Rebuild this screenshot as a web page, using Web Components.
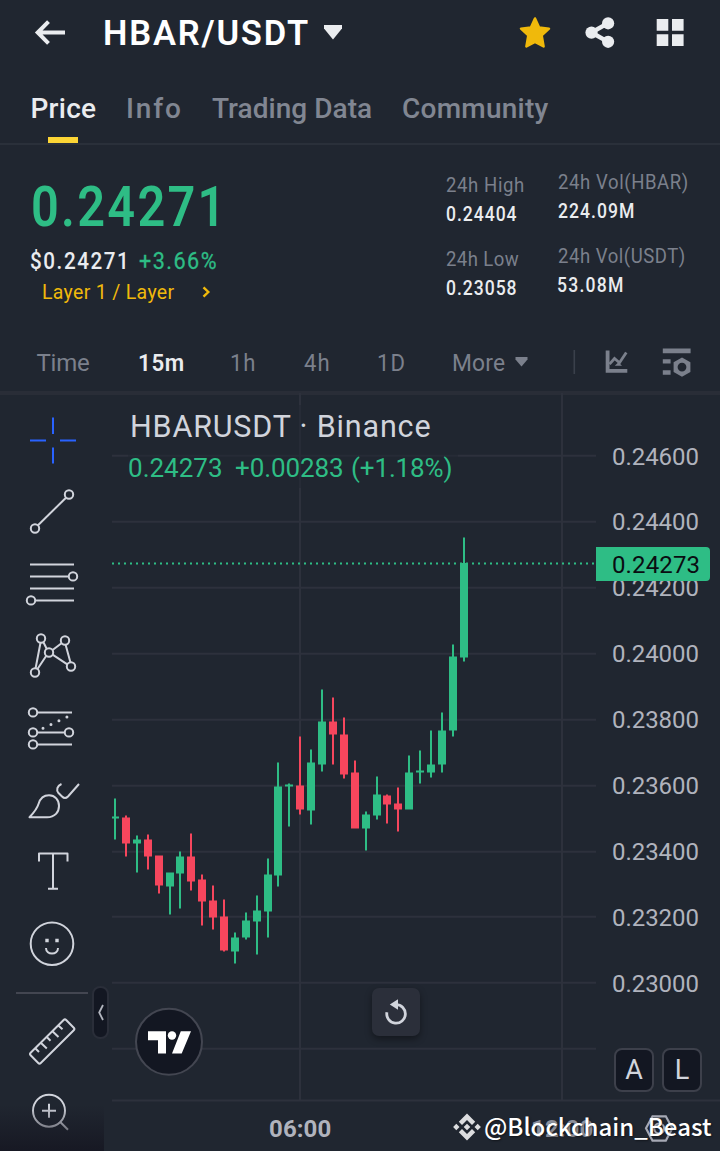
<!DOCTYPE html>
<html lang="en">
<head>
<meta charset="utf-8">
<title>HBAR/USDT</title>
<style>
  html, body {
    margin: 0;
    background: #202630;
  }
  body {
    font-family: Roboto, "Liberation Sans", sans-serif;
    color: #eaecef;
    --muted: #7b808c;
    --up: #2ebd85;
    --dark: #131722;
    --accent: #f0b90b;
  }
</style>
</head>
<body>
<trade-page></trade-page>

<script>
// one line of text, tracked so that its ink is exactly `w` pixels wide
class FitText extends HTMLElement {
  constructor() {
    super();
    this.attachShadow({ mode: 'open' }).innerHTML = `
      <style>
        :host { display: block; flex: none; }
        span { display: inline-block; white-space: pre; transform-origin: 0 50%; vertical-align: top; }
      </style>
      <span><slot></slot></span>
    `;
    this.$span = this.shadowRoot.querySelector('span');
    this.$slot = this.shadowRoot.querySelector('slot');
  }

  connectedCallback() {
    const text = this.$slot.assignedNodes({ flatten: true }).map(n => n.textContent).join('');
    const w = Number(this.getAttribute('w'));
    const squeeze = Number(this.getAttribute('squeeze') || 1);
    const style = getComputedStyle(this);
    const ctx = document.createElement('canvas').getContext('2d');
    ctx.font = `${style.fontWeight} ${style.fontSize} ${style.fontFamily}`;
    const m = ctx.measureText(text);
    const ink = m.actualBoundingBoxLeft + m.actualBoundingBoxRight;
    this.style.width = `${w}px`;
    this.$span.style.letterSpacing = `${(w / squeeze - ink) / Math.max(1, text.length - 1)}px`;
    this.$span.style.marginLeft = `${m.actualBoundingBoxLeft * squeeze}px`;
    if (squeeze !== 1) this.$span.style.transform = `scaleX(${squeeze})`;
  }
}

class PairHeader extends HTMLElement {
  constructor() {
    super();
    this.attachShadow({ mode: 'open' }).innerHTML = `
      <style>
        :host { display: flex; height: 66px; align-items: center; box-sizing: border-box; padding: 0 32px 0 34px; }
        svg { display: block; flex: none; margin-top: -1px; }
        fit-text { font-size: 34.5px; font-weight: 600; line-height: 68px; color: #fff; margin: 0 15px 0 39px; }
        .actions { display: flex; margin-left: auto; align-items: center; }
        .star { margin-right: 32.5px; }
        .share { margin-right: 36.5px; }
      </style>
      <svg width="32" height="64" viewBox="34 0 32 64" fill="none" stroke="#eaecef" stroke-width="4">
        <path d="M65 31.5H38M48.5 20.7L37.7 31.5l10.8 10.8"/>
      </svg>
      <fit-text w="203"><slot></slot></fit-text>
      <svg width="20" height="64" viewBox="323 0 20 64"><path d="M324 24h18v3.5l-9 11-9-11z" fill="#eaecef"/></svg>
      <div class="actions">
        <svg class="star" width="32" height="64" viewBox="519 0 32 64">
          <path d="M535 17.5l4.1 9 9.9 1.2-7.3 6.7 1.9 11.1-8.6-4.5-8.6 4.5 1.9-11.1-7.3-6.7 9.9-1.2z" fill="#f0b90b" stroke="#f0b90b" stroke-width="2.5" stroke-linejoin="round"/>
        </svg>
        <svg class="share" width="32" height="64" viewBox="583.5 0 32 64" fill="#eaecef">
          <path d="M607.5 22.2L591 31.5l16.5 9.3" fill="none" stroke="#eaecef" stroke-width="4.4"/>
          <circle cx="591" cy="31.6" r="6.1"/><circle cx="607.6" cy="22.3" r="6.1"/><circle cx="607.6" cy="40.8" r="6.1"/>
        </svg>
        <svg width="36" height="64" viewBox="652 0 36 64" fill="#eaecef">
          <path d="M656.7 18h11.6v11.8h-11.6zM672 18h11.6v11.8H672zM656.7 33.3h11.6v11.8h-11.6zM672 33.3h11.6v11.8H672z"/>
        </svg>
      </div>
    `;
  }
}

class TabBar extends HTMLElement {
  constructor() {
    super();
    this.attachShadow({ mode: 'open' }).innerHTML = `
      <style>
        :host { display: flex; height: 79px; box-sizing: border-box; border-bottom: 2px solid #2a303a; padding-left: 32.5px; gap: 32px; }
        fit-text { font-size: 28px; font-weight: 500; line-height: 86px; color: #818692; height: 77px; }
        .on { color: #eaecef; position: relative; }
        .on::after { content: ''; position: absolute; left: 15.5px; bottom: 0; width: 30px; height: 6px; background: #fcd535; }
      </style>
      <fit-text class="on" w="63.5">Price</fit-text>
      <fit-text w="52">Info</fit-text>
      <fit-text w="159">Trading Data</fit-text>
      <fit-text w="145.5">Community</fit-text>
    `;
  }
}

class MarketStat extends HTMLElement {
  constructor() {
    super();
    this.attachShadow({ mode: 'open' }).innerHTML = `
      <style>
        :host { display: block; height: 74px; font-size: 19.5px; line-height: 29px; }
        .label { color: var(--muted); }
        .value { color: #eaecef; font-weight: 500; }
      </style>
      <fit-text class="label" squeeze=".95" w="${this.getAttribute('lw')}">${this.getAttribute('label')}</fit-text>
      <fit-text class="value" squeeze=".9" w="${this.getAttribute('vw')}">${this.getAttribute('value')}</fit-text>
    `;
  }
}

class PriceSummary extends HTMLElement {
  constructor() {
    super();
    this.attachShadow({ mode: 'open' }).innerHTML = `
      <style>
        :host { display: flex; height: 185px; box-sizing: border-box; }
        .left { width: 446px; padding: 32px 0 0 33px; box-sizing: border-box; }
        .last { font-size: 56px; font-weight: 600; line-height: 60px; color: var(--up); }
        .row { display: flex; height: 48px; line-height: 48px; font-size: 24px; font-weight: 500; margin-left: -2px; gap: 13.5px; }
        .up { color: var(--up); font-weight: 400; -webkit-text-stroke: .3px var(--up); }
        .tag { display: flex; height: 32px; margin: -9px 0 0 10px; line-height: 33px; font-size: 19.5px; color: var(--accent); gap: 27px; }
        svg { display: block; }
        .a, .b { display: flex; flex-direction: column; }
        .a { padding-top: 25.5px; width: 111.5px; }
        .b { padding-top: 22.5px; }
      </style>
      <div class="left">
        <fit-text class="last" w="184" squeeze=".87">0.24271</fit-text>
        <div class="row">
          <fit-text w="94" squeeze=".86">$0.24271</fit-text>
          <fit-text class="up" w="77" squeeze=".9">+3.66%</fit-text>
        </div>
        <div class="tag">
          <fit-text w="131.5">Layer 1 / Layer</fit-text>
          <svg width="9" height="32" viewBox="0 -16 9 32" fill="none" stroke="#f0b90b" stroke-width="2.4"><path d="M1.5 -4.6L6.3 0 1.5 4.6"/></svg>
        </div>
      </div>
      <div class="a">
        <market-stat label="24h High" value="0.24404" lw="77.5" vw="70.5"></market-stat>
        <market-stat label="24h Low" value="0.23058" lw="73" vw="70.5"></market-stat>
      </div>
      <div class="b">
        <market-stat label="24h Vol(HBAR)" value="224.09M" lw="129.5" vw="75.5"></market-stat>
        <market-stat label="24h Vol(USDT)" value="53.08M" lw="126.5" vw="64.5"></market-stat>
      </div>
    `;
  }
}

class IntervalBar extends HTMLElement {
  constructor() {
    super();
    this.attachShadow({ mode: 'open' }).innerHTML = `
      <style>
        :host { display: flex; height: 65px; box-sizing: border-box; border-bottom: 4px solid #292d37; padding-left: 36.5px; font-size: 24px; line-height: 67px; color: var(--muted); }
        .on { color: #eaecef; font-weight: 600; }
        svg { display: block; }
      </style>
      <fit-text w="52.5">Time</fit-text>
      <fit-text class="on" w="44.5" squeeze=".93" style="margin-left: 49.5px">15m</fit-text>
      <fit-text w="22.5" squeeze=".92" style="margin-left: 48.5px">1h</fit-text>
      <fit-text w="24.5" squeeze=".92" style="margin-left: 49.5px">4h</fit-text>
      <fit-text w="25.5" squeeze=".92" style="margin-left: 51px">1D</fit-text>
      <fit-text w="51.5" squeeze=".95" style="margin-left: 48.5px">More</fit-text>
      <svg width="200" height="61" viewBox="504.5 330 200 61" fill="#7b808c">
        <path d="M515 357h12v2.5l-6 7-6-7z"/>
        <path d="M573 350h1.6v24H573z" fill="#3a404b"/>
        <path d="M605.2 350.5h3.8v18.4h17.8v3.8h-21.6z"/>
        <path d="M609 364.2l5-5.7 5 4.2 6.8-10.2" fill="none" stroke="#7b808c" stroke-width="2.8"/>
        <path d="M614.3 365.8l3.6-3.6 3.6 3.6z"/>
        <path d="M662.3 348.5h27.8v4.8h-27.8zM662.3 359.2h7.8v4.4h-7.8zM662.3 370.3h7.8v4.4h-7.8z"/>
        <path d="M681.5 357.5l8.4 4.8v9.6l-8.4 4.8-8.4-4.8v-9.6zm0 5.2a4.4 4.4 0 1 0 0 8.8 4.4 4.4 0 0 0 0-8.8z" fill-rule="evenodd"/>
      </svg>
    `;
  }
}

// every icon is drawn in a 104x72 cell, y = 0 is the middle of the cell
const TOOLS = {
  cross: '<path stroke="#2962ff" d="M30 .5h16M60 .5h16M53-22.5v16.5M53 7.500v16"/>',
  line: '<path d="M38 13.3L66-14.3"/><circle cx="35" cy="16.5" r="4.2"/><circle cx="69" cy="-17.5" r="4.2"/>',
  fib: '<path d="M30-19.6h44M30-7.6h39M30 4.4h44M35 16.4h39"/><circle cx="73" cy="-7.6" r="4.2"/><circle cx="31" cy="16.4" r="4.2"/>',
  pattern: `<path d="M40.5-13.3L35.6 12.3M43.3-14L46.8-7M46.3-.3L37.5 13M52.6-6L61.5-12.7M52.6-1.3L67.3 8.3M65.6-11.3L70.4 6.3"/>
    <circle cx="41" cy="-17.5" r="4.2"/><circle cx="65" cy="-15.5" r="4.2"/><circle cx="49" cy="-3.5" r="4.2"/><circle cx="35" cy="16.5" r="4.2"/><circle cx="71" cy="10.5" r="4.2"/>`,
  projection: `<path d="M37-15.6h35M37 4.4h28M37 16.4h35"/>
    <circle cx="33" cy="-15.6" r="4.2"/><circle cx="33" cy="4.4" r="4.2"/><circle cx="69" cy="4.4" r="4.2"/><circle cx="33" cy="16.4" r="4.2"/>
    <path stroke-width="3" stroke-linecap="round" stroke-dasharray="0 8.8" d="M43 .2L68-11.5"/>`,
  brush: '<path stroke-linejoin="round" d="M29.500 17.3H47C55 17.3 59 12 59 6S55-4.7 49-4.7C43-4.7 40-1 38.5 4S33.500 13 29.500 17.3z"/><path d="M61.5-16C57-14 56-10 58.5-7L62-3.5C64-1.5 66-1.5 68-3.5L79-16"/>',
  text: '<path d="M39-10.500v-8h28.5v8M53-18v34.5M48 16.7h10" stroke-linejoin="round"/>',
  smile: '<circle cx="52" cy="-.3" r="21.3"/><path d="M46 4c0 7.3 12 7.3 12 0"/><path fill="#d1d4dc" stroke="none" d="M45.3-5.2h3.4v3.4h-3.4zM55.3-5.2h3.4v3.4h-3.4z"/>',
  ruler: `<rect x="-25" y="-7.2" width="50" height="14.400" rx="1.8" transform="translate(52.2 .5) rotate(-44.7)"/>
    <path d="M35 7l4 4M40.5 1.5l6.3 6M46.5-4.3l4 4M52.2-10l6.3 6M58-15.7l4.5 4"/>`,
  zoom: '<circle cx="49" cy="-2.3" r="16"/><path d="M42-2.3h14M49-9.3v14M60.5 9.2L68 16.7"/>',
};

class ToolIcon extends HTMLElement {
  constructor() {
    super();
    this.attachShadow({ mode: 'open' }).innerHTML = `
      <style>
        :host { display: block; height: 72px; }
        svg { display: block; }
      </style>
      <svg width="104" height="72" viewBox="0 -36 104 72" fill="none" stroke="#d1d4dc" stroke-width="2">${TOOLS[this.getAttribute('name')]}</svg>
    `;
  }
}

class DrawingToolbar extends HTMLElement {
  constructor() {
    super();
    this.attachShadow({ mode: 'open' }).innerHTML = `
      <style>
        :host { display: block; position: relative; width: 112px; height: 756px; overflow: hidden; box-sizing: border-box; padding-top: 9px; }
        hr { width: 72px; height: 2px; margin: 11.5px 0 11.5px 16px; border: 0; background: #434651; }
        .fade { position: absolute; left: 0; bottom: 0; width: 104px; height: 46px; background: linear-gradient(rgba(22,23,34,0), rgba(22,23,34,.9)); }
        .handle { position: absolute; left: 92px; top: 591px; box-sizing: border-box; width: 17px; height: 53px; border: 2px solid #2a2e39; border-radius: 8px; background: var(--dark); }
        .handle svg { display: block; }
      </style>
      <tool-icon name="cross"></tool-icon>
      <tool-icon name="line"></tool-icon>
      <tool-icon name="fib"></tool-icon>
      <tool-icon name="pattern"></tool-icon>
      <tool-icon name="projection"></tool-icon>
      <tool-icon name="brush"></tool-icon>
      <tool-icon name="text"></tool-icon>
      <tool-icon name="smile"></tool-icon>
      <hr>
      <tool-icon name="ruler"></tool-icon>
      <tool-icon name="zoom"></tool-icon>
      <div class="fade"></div>
      <div class="handle"><svg width="13" height="49" viewBox="0 0 13 49" fill="none" stroke="#b2b5be" stroke-width="1.8"><path d="M9 17L5.2 24.5 9 32"/></svg></div>
    `;
  }
}

// x, body top, body bottom, wick top, wick bottom, direction
const CANDLES = [
  [115, 816.5, 818.5, 798.5, 839.5, 1], [126, 817.5, 843.5, 815.5, 856.5, 0], [137, 839.5, 843.5, 835.5, 872.5, 1],
  [148, 839.5, 856.5, 834.5, 869.5, 0], [159, 855.5, 885.5, 855.5, 893.5, 0], [170, 872.5, 886.5, 872.5, 914.5, 1],
  [180, 856.5, 873.5, 851.5, 908.5, 1], [191, 856.5, 881.5, 833.5, 890.5, 0], [202, 879.5, 901.5, 874.5, 925.5, 0],
  [213, 900.5, 917.5, 885.5, 929.5, 0], [224, 916.5, 950.5, 899.5, 951.5, 0], [235, 937.5, 951.5, 932.5, 963.5, 1],
  [246, 920.5, 937.5, 912.5, 939.5, 1], [257, 910.5, 921.5, 895.5, 954.5, 1], [268, 874.5, 911.5, 858.5, 937.5, 1],
  [278, 786.5, 875.5, 762.5, 886.5, 1], [289, 784.5, 786.5, 783.5, 826.5, 1], [300, 785.5, 809.5, 736.5, 814.5, 0],
  [311, 762.5, 810.5, 749.5, 824.5, 1], [322, 721.5, 764.5, 689.5, 771.5, 1], [333, 721.5, 734.5, 697.5, 764.5, 0],
  [344, 734.5, 774.5, 717.5, 778.5, 0], [355, 772.5, 828.5, 760.5, 828.5, 0], [366, 814.5, 828.5, 811.5, 850.5, 1],
  [377, 794.5, 815.5, 776.5, 819.5, 1], [387, 795.5, 804.5, 794.5, 823.5, 0], [398, 803.5, 809.5, 787.5, 831.5, 0],
  [409, 772.5, 809.5, 755.5, 809.5, 1], [420, 770.5, 772.5, 750.5, 783.5, 1], [431, 764.5, 772.5, 730.5, 777.5, 1],
  [442, 730.5, 764.5, 712.5, 772.5, 1], [453, 656.5, 730.5, 644.5, 736.5, 1], [464, 563, 657.5, 537.5, 661.5, 1],
];

class CandleChart extends HTMLElement {
  constructor() {
    super();
    const rows = [456, 522, 588, 654, 720, 786, 852, 917, 983, 1049];
    const grid = rows.map(y => `M112 ${y - .3}H596`).join('') + 'M300 393V1100M562 393V1100M112 1100.5H720';
    const candles = CANDLES.map(([x, top, bottom, high, low, up]) => `
      <path fill="${up ? '#2ebd85' : '#f6465d'}" d="M${x - 1} ${high}h2V${low}h-2zM${x - 4} ${top}h8V${bottom}h-8z"/>`).join('');
    this.attachShadow({ mode: 'open' }).innerHTML = `
      <style>
        :host { display: block; position: relative; width: 484px; height: 756px; }
        svg { display: block; overflow: visible; }
        .legend { position: absolute; left: 16px; top: 10px; background: rgba(32,38,48,.5); padding-right: 6px; }
        .name { font-size: 30.5px; line-height: 44px; color: #d1d4dc; margin-left: 4px; }
        .change { display: flex; font-size: 26px; line-height: 39px; color: var(--up); margin-left: 1px; }
        .reset { position: absolute; left: 260px; top: 593px; width: 48px; height: 48px; border-radius: 7px; background: #2b2f3a; box-shadow: 0 3px 7px rgba(0,0,0,.4); }
        .logo { position: absolute; left: 23px; top: 613px; }
      </style>
      <svg width="484" height="756" viewBox="112 395 484 756">
        <defs><clipPath id="pane"><path d="M112 395h484v756H112z"/></clipPath></defs>
        <path d="${grid}" fill="none" stroke="#2d313c" stroke-width="2"/>
        <g clip-path="url(#pane)">${candles}</g>
        <path d="M112 563.5H596" stroke="#2ebd85" stroke-width="2" stroke-dasharray="2 4"/>
      </svg>
      <div class="legend">
        <fit-text class="name" w="299">HBARUSDT · Binance</fit-text>
        <div class="change">
          <fit-text w="92">0.24273</fit-text>
          <fit-text w="107" style="margin-left: 14px">+0.00283</fit-text>
          <fit-text w="99.5" style="margin-left: 10px">(+1.18%)</fit-text>
        </div>
      </div>
      <svg class="logo" width="68" height="68" viewBox="135 1008 68 68">
        <circle cx="169" cy="1041.8" r="33" fill="#131722" stroke="#434651" stroke-width="2"/>
        <path fill="#fff" d="M148 1031.2h18v22.3h-8v-13.3h-10zM180.8 1031.2H191l-9.3 22.3H172z"/><circle cx="172" cy="1035.5" r="4.2" fill="#fff"/>
      </svg>
      <div class="reset">
        <svg width="48" height="48" viewBox="372 988 48 48"><path d="M386.9 1012.3A9.3 9.3 0 1 0 396 1004.6" fill="none" stroke="#d1d4dc" stroke-width="2.8"/><path d="M389.8 1004.5l8.2-5.3v10.5z" fill="#d1d4dc"/></svg>
      </div>
    `;
  }
}

class PriceAxis extends HTMLElement {
  constructor() {
    super();
    const labels = ['0.24600', '0.24400', '0.24200', '0.24000', '0.23800', '0.23600', '0.23400', '0.23200', '0.23000'];
    this.attachShadow({ mode: 'open' }).innerHTML = `
      <style>
        :host { display: block; position: relative; width: 124px; height: 756px; box-sizing: border-box; padding-top: 28.5px; font-size: 24px; color: #b0b3bd; }
        .label { height: 65.88px; line-height: 66px; margin-left: 17px; }
        .last { position: absolute; left: 0; top: 151.5px; width: 114px; height: 34px; box-sizing: border-box; padding-left: 17px; line-height: 36px; background: var(--up); color: #0a0d12; border-radius: 0 4px 4px 0; }
        .modes { display: flex; gap: 8px; margin: 31.5px 0 0 18px; }
        .modes div { box-sizing: border-box; width: 40px; height: 44px; border: 2px solid #3d404b; border-radius: 8px; background: var(--dark); color: #d1d4dc; font-size: 27px; line-height: 40px; text-align: center; }
      </style>
      ${labels.map(l => `<fit-text class="label" w="85.5">${l}</fit-text>`).join('')}
      <div class="modes"><div>A</div><div>L</div></div>
      <div class="last"><fit-text w="85.5">0.24273</fit-text></div>
    `;
  }
}

class TimeAxis extends HTMLElement {
  constructor() {
    super();
    this.attachShadow({ mode: 'open' }).innerHTML = `
      <style>
        :host { display: flex; position: absolute; left: 270px; right: 0; bottom: 0; height: 46px; line-height: 48px; font-size: 24px; font-weight: 700; color: #b0b3bd; }
        .noon { margin-left: 201.5px; color: #8d909c; }
        svg { display: block; margin-left: 51px; }
      </style>
      <fit-text w="60.5">06:00</fit-text>
      <fit-text class="noon" w="60.5">12:00</fit-text>
      <svg width="30" height="46" viewBox="643 1105 30 46" fill="none" stroke="#a6a9b4" stroke-width="2.2">
        <path d="M651.5 1116.3h13.3l6.5 12-6.5 12.4h-13.3l-6.5-12.4z"/><circle cx="658.2" cy="1128.5" r="5"/>
      </svg>
    `;
  }
}

class WaterMark extends HTMLElement {
  constructor() {
    super();
    this.attachShadow({ mode: 'open' }).innerHTML = `
      <style>
        :host { display: flex; position: absolute; left: 453px; bottom: 4px; height: 40px; line-height: 38px; gap: 4px; font-family: "Noto Sans CJK SC", "Noto Sans", sans-serif; font-size: 24px; font-weight: 500; color: #fff; text-shadow: 1px 1px 2px rgba(0,0,0,.45); }
        svg { display: block; }
      </style>
      <svg width="28" height="40" viewBox="-14 -20 28 40" fill="#dcdddf">
        <path d="M0-13.5l8.2 8.2-3.2 3.2-5-5-5 5-3.2-3.2zM0 13.5l8.2-8.2L5 2.1l-5 5-5-5-3.2 3.2zM-10.7-3.2L-7.5 0l-3.2 3.2L-13.9 0zM10.7-3.2L13.9 0l-3.2 3.2L7.5 0zM0-3.3L3.3 0 0 3.3-3.3 0z"/>
      </svg>
      <fit-text w="227">@Blockchain_Beast</fit-text>
    `;
  }
}

class TradePage extends HTMLElement {
  constructor() {
    super();
    this.attachShadow({ mode: 'open' }).innerHTML = `
      <style>
        :host { display: flex; flex-direction: column; position: relative; width: 720px; height: 1151px; overflow: hidden; background: #202630; }
        .chart { display: flex; height: 756px; }
      </style>
      <pair-header>HBAR/USDT</pair-header>
      <tab-bar></tab-bar>
      <price-summary></price-summary>
      <interval-bar></interval-bar>
      <div class="chart">
        <drawing-toolbar></drawing-toolbar>
        <candle-chart></candle-chart>
        <price-axis></price-axis>
      </div>
      <time-axis></time-axis>
      <water-mark></water-mark>
    `;
  }
}

customElements.define('fit-text', FitText);
customElements.define('pair-header', PairHeader);
customElements.define('tab-bar', TabBar);
customElements.define('market-stat', MarketStat);
customElements.define('price-summary', PriceSummary);
customElements.define('interval-bar', IntervalBar);
customElements.define('tool-icon', ToolIcon);
customElements.define('drawing-toolbar', DrawingToolbar);
customElements.define('candle-chart', CandleChart);
customElements.define('price-axis', PriceAxis);
customElements.define('time-axis', TimeAxis);
customElements.define('water-mark', WaterMark);
customElements.define('trade-page', TradePage);
</script>
</body>
</html>
